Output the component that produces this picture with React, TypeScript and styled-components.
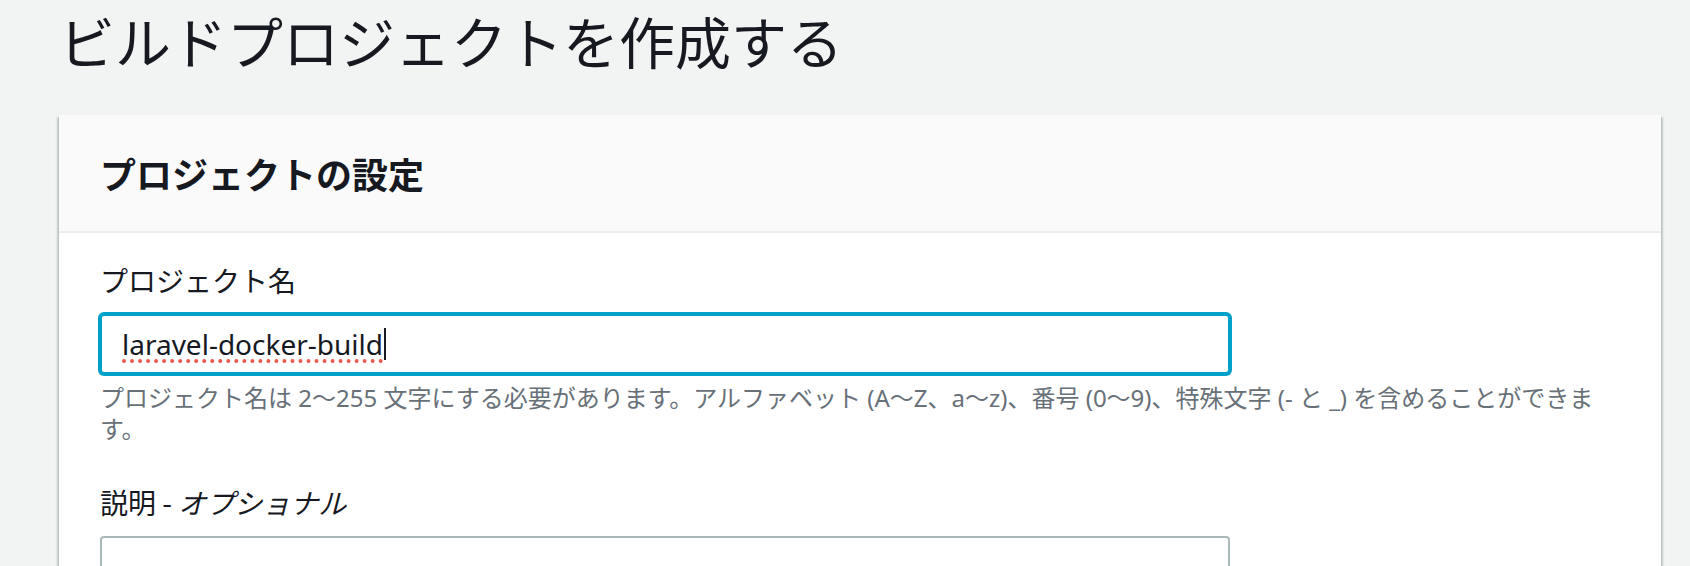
import React from "react";
import styled, { createGlobalStyle } from "styled-components";

const GlobalStyle = createGlobalStyle`
  html, body {
    margin: 0;
    padding: 0;
    background: #f2f3f3;
    color: #16191f;
    font-family: "Noto Sans", "Noto Sans CJK JP", sans-serif;
  }
`;

const Page = styled.main`
  padding: 0 29px 0 59px;
`;

const PageTitle = styled.h1`
  margin: 0 0 35px;
  font-family: "Noto Sans CJK JP", sans-serif;
  font-size: 56px;
  font-weight: 400;
  line-height: 80px;
  color: #16191f;
`;

const Panel = styled.section`
  background: #fff;
  box-shadow: 0 2px 2px 0 rgba(0, 28, 36, 0.3), 2px 2px 2px 0 rgba(0, 28, 36, 0.15),
    -2px 2px 2px 0 rgba(0, 28, 36, 0.15);
`;

const PanelHeader = styled.header`
  display: flex;
  align-items: center;
  height: 116px;
  padding: 0 41px;
  background: #fafafa;
  border-bottom: 2px solid #eaeded;
`;

const PanelHeading = styled.h2`
  margin: 0;
  font-family: "Noto Sans CJK JP", sans-serif;
  font-size: 36px;
  font-weight: 700;
  line-height: 48px;
`;

const PanelBody = styled.div`
  padding: 27px 41px 40px;
  display: flex;
  flex-direction: column;
  gap: 38px;
`;

const Field = styled.div`
  display: flex;
  flex-direction: column;
`;

const FieldLabel = styled.label`
  font-family: "Noto Sans CJK JP", sans-serif;
  font-size: 28px;
  line-height: 40px;
  color: #16191f;
  margin-bottom: 14px;
`;

const Optional = styled.em`
  font-style: italic;
`;

const TextBox = styled.div<{ $focused?: boolean }>`
  box-sizing: border-box;
  width: 1130px;
  height: 60px;
  display: flex;
  align-items: center;
  padding: 0 20px;
  background: #fff;
  border: 2px solid ${(p) => (p.$focused ? "#00a1c9" : "#aab7b8")};
  border-radius: 4px;
  box-shadow: ${(p) => (p.$focused ? "0 0 0 2px #00a1c9" : "none")};
  font-size: 28px;
  color: #16191f;
`;

// spellcheck squiggle under the typed value
const Value = styled.span`
  text-decoration: underline dotted #ee5a52;
  text-decoration-thickness: 4px;
  text-underline-offset: 4px;
`;

const Caret = styled.span`
  display: inline-block;
  width: 2px;
  height: 32px;
  margin-left: 1px;
  background: #16191f;
`;

const Hint = styled.p`
  margin: 8px 0 0;
  font-family: "Noto Sans", "Noto Sans CJK JP", sans-serif;
  font-size: 24px;
  line-height: 31px;
  color: #687078;
`;

export default function App() {
  return (
    <>
      <GlobalStyle />
      <Page>
        <PageTitle>ビルドプロジェクトを作成する</PageTitle>
        <Panel>
          <PanelHeader>
            <PanelHeading>プロジェクトの設定</PanelHeading>
          </PanelHeader>
          <PanelBody>
            <Field>
              <FieldLabel>プロジェクト名</FieldLabel>
              <TextBox $focused>
                <Value>laravel-docker-build</Value>
                <Caret />
              </TextBox>
              <Hint>
                プロジェクト名は 2〜255 文字にする必要があります。アルファベット (A〜Z、a〜z)、番号 (0〜9)、特殊文字 (- と _) を含めることができます。
              </Hint>
            </Field>
            <Field>
              <FieldLabel>
                説明 - <Optional>オプショナル</Optional>
              </FieldLabel>
              <TextBox />
            </Field>
          </PanelBody>
        </Panel>
      </Page>
    </>
  );
}
